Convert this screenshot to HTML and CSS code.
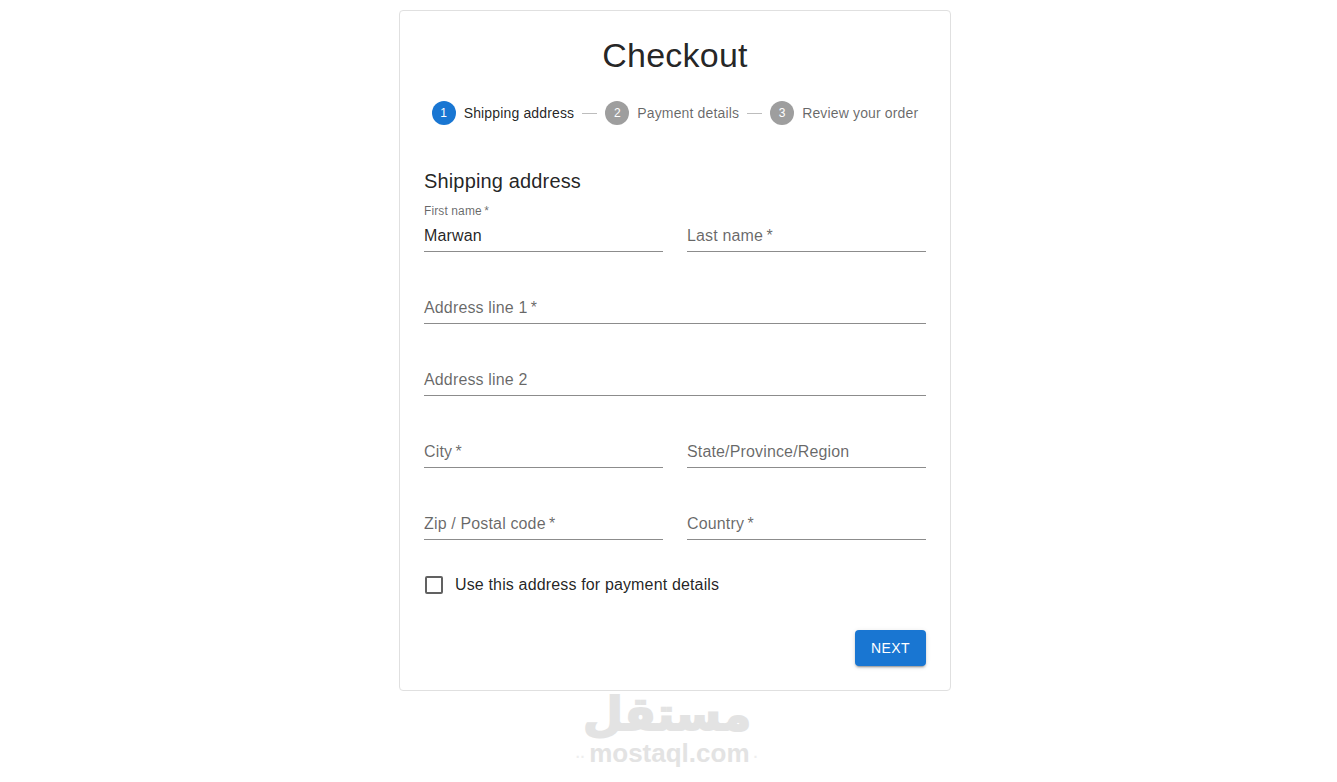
FILE: index.html
```html
<!DOCTYPE html>
<html lang="en">
<head>
    <meta charset="UTF-8">
    <meta name="viewport" content="width=device-width, initial-scale=1.0">
    <title>Checkout</title>
    <link rel="stylesheet" href="styles.css">
</head>
<body>
    <main class="card">
        <h1 class="title">Checkout</h1>

        <div class="stepper">
            <div class="step active"><span class="step-num">1</span><span class="step-label">Shipping address</span></div>
            <span class="step-line"></span>
            <div class="step"><span class="step-num">2</span><span class="step-label">Payment details</span></div>
            <span class="step-line"></span>
            <div class="step"><span class="step-num">3</span><span class="step-label">Review your order</span></div>
        </div>

        <h2 class="section-title">Shipping address</h2>

        <form class="form-grid">
            <div class="field">
                <span class="small-label">First name&thinsp;*</span>
                <span class="value">Marwan</span>
            </div>
            <div class="field"><span class="placeholder">Last name&thinsp;*</span></div>
            <div class="field wide"><span class="placeholder">Address line 1&thinsp;*</span></div>
            <div class="field wide"><span class="placeholder">Address line 2</span></div>
            <div class="field"><span class="placeholder">City&thinsp;*</span></div>
            <div class="field"><span class="placeholder">State/Province/Region</span></div>
            <div class="field"><span class="placeholder">Zip / Postal code&thinsp;*</span></div>
            <div class="field"><span class="placeholder">Country&thinsp;*</span></div>
            <label class="check wide"><span class="check-box"></span>Use this address for payment details</label>
        </form>

        <div class="actions">
            <button class="next-btn" type="button">Next</button>
        </div>
    </main>

    <!-- watermark sits on top of the page -->
    <div class="watermark">
        <div class="wm-arabic" lang="ar" dir="rtl">مستقل</div>
        <div class="wm-latin"><span class="wm-dots">··</span>mostaql.com<span class="wm-dots">·</span></div>
    </div>
</body>
</html>
```

FILE: styles.css
```css
body {
    margin: 0;
    background: #fff;
    font-family: "Liberation Sans", Arial, sans-serif;
    color: rgba(0, 0, 0, 0.87);
}

.card {
    box-sizing: border-box;
    width: 552px;
    height: 681px;
    margin: 10px 0 0 399px;
    padding: 24px;
    border: 1px solid #e0e0e0;
    border-radius: 4px;
}

.title {
    margin: 0;
    font-size: 34px;
    font-weight: 400;
    line-height: 40px;
    letter-spacing: 0.25px;
    text-align: center;
}

.stepper {
    display: flex;
    align-items: center;
    justify-content: center;
    margin-top: 26px;
}

.step {
    display: flex;
    align-items: center;
    gap: 8px;
}

.step-num {
    width: 24px;
    height: 24px;
    border-radius: 50%;
    background: #9e9e9e;
    color: #fff;
    font-size: 12px;
    line-height: 24px;
    text-align: center;
}

.step-label {
    font-size: 14px;
    letter-spacing: 0.15px;
    color: rgba(0, 0, 0, 0.6);
}

.step.active .step-num {
    background: #1976d2;
}

.step.active .step-label {
    color: rgba(0, 0, 0, 0.87);
}

.step-line {
    width: 15px;
    margin: 0 8px;
    border-top: 1px solid #bdbdbd;
}

.section-title {
    margin: 40px 0 0;
    font-size: 20px;
    font-weight: 400;
    line-height: 32px;
    letter-spacing: 0.15px;
}

.form-grid {
    display: grid;
    grid-template-columns: 1fr 1fr;
    gap: 24px;
    margin-top: 7px;
}

.wide {
    grid-column: 1 / -1;
}

.field {
    box-sizing: border-box;
    height: 48px;
    padding-bottom: 4px;
    display: flex;
    flex-direction: column;
    justify-content: flex-end;
    border-bottom: 1px solid #8c8c8c;
    font-size: 16px;
    line-height: 23px;
    letter-spacing: 0.15px;
}

.small-label {
    font-size: 12px;
    line-height: 14px;
    margin-bottom: 6px;
    letter-spacing: 0.11px;
    color: rgba(0, 0, 0, 0.6);
}

.placeholder {
    color: rgba(0, 0, 0, 0.6);
}

.check {
    display: flex;
    align-items: center;
    gap: 12px;
    height: 43px;
    margin-top: -1px;
    font-size: 16px;
    letter-spacing: 0.15px;
}

.check-box {
    box-sizing: border-box;
    width: 18px;
    height: 18px;
    margin-left: 1px;
    border: 2px solid #616161;
    border-radius: 2px;
}

.actions {
    display: flex;
    justify-content: flex-end;
    margin-top: 24px;
}

.next-btn {
    width: 71px;
    height: 36px;
    padding: 0;
    border: 0;
    border-radius: 4px;
    background: #1976d2;
    color: #fff;
    font-family: inherit;
    font-size: 14px;
    letter-spacing: 0.4px;
    text-transform: uppercase;
    box-shadow: 0 3px 1px -2px rgba(0, 0, 0, 0.2), 0 2px 2px rgba(0, 0, 0, 0.14), 0 1px 5px rgba(0, 0, 0, 0.12);
}

.watermark {
    position: absolute;
    left: 567px;
    top: 688px;
    width: 200px;
    text-align: center;
    color: #e3e3e3;
    font-weight: 700;
}

.wm-arabic {
    font-family: "DejaVu Sans", sans-serif;
    font-size: 46px;
    line-height: 52px;
    -webkit-text-stroke: 2px #e3e3e3;
}

.wm-latin {
    font-family: "Liberation Sans", sans-serif;
    font-size: 26px;
    line-height: 26px;
    white-space: nowrap;
}

.wm-dots {
    color: #eee;
    font-size: 14px;
    margin: 0 4px;
}
```
